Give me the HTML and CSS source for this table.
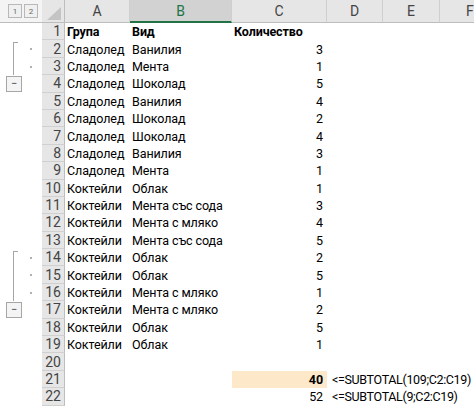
FILE: index.html
```html
<!DOCTYPE html>
<html>
<head>
<meta charset="utf-8">
<link rel="stylesheet" href="styles.css">
</head>
<body>
<div class="sheet">
  <div class="hdr outline-hdr"><span class="lvl">1</span><span class="lvl">2</span></div>
  <div class="hdr corner"><span class="tri"></span></div>
  <div class="hdr col">A</div>
  <div class="hdr col sel">B</div>
  <div class="hdr col">C</div>
  <div class="hdr col">D</div>
  <div class="hdr col">E</div>
  <div class="hdr col last">F</div>

  <div class="ol"></div><div class="rn">1</div><div class="c b">Група</div><div class="c b">Вид</div><div class="c b">Количество</div><div class="c"></div><div class="c"></div><div class="c"></div>
  <div class="ol"><span class="ln start"></span><span class="dot"></span></div><div class="rn">2</div><div class="c">Сладолед</div><div class="c">Ванилия</div><div class="c n">3</div><div class="c"></div><div class="c"></div><div class="c"></div>
  <div class="ol"><span class="ln"></span><span class="dot"></span></div><div class="rn">3</div><div class="c">Сладолед</div><div class="c">Мента</div><div class="c n">1</div><div class="c"></div><div class="c"></div><div class="c"></div>
  <div class="ol"><span class="minus">−</span></div><div class="rn">4</div><div class="c">Сладолед</div><div class="c">Шоколад</div><div class="c n">5</div><div class="c"></div><div class="c"></div><div class="c"></div>
  <div class="ol"></div><div class="rn">5</div><div class="c">Сладолед</div><div class="c">Ванилия</div><div class="c n">4</div><div class="c"></div><div class="c"></div><div class="c"></div>
  <div class="ol"></div><div class="rn">6</div><div class="c">Сладолед</div><div class="c">Шоколад</div><div class="c n">2</div><div class="c"></div><div class="c"></div><div class="c"></div>
  <div class="ol"></div><div class="rn">7</div><div class="c">Сладолед</div><div class="c">Шоколад</div><div class="c n">4</div><div class="c"></div><div class="c"></div><div class="c"></div>
  <div class="ol"></div><div class="rn">8</div><div class="c">Сладолед</div><div class="c">Ванилия</div><div class="c n">3</div><div class="c"></div><div class="c"></div><div class="c"></div>
  <div class="ol"></div><div class="rn">9</div><div class="c">Сладолед</div><div class="c">Мента</div><div class="c n">1</div><div class="c"></div><div class="c"></div><div class="c"></div>
  <div class="ol"></div><div class="rn">10</div><div class="c">Коктейли</div><div class="c">Облак</div><div class="c n">1</div><div class="c"></div><div class="c"></div><div class="c"></div>
  <div class="ol"></div><div class="rn">11</div><div class="c">Коктейли</div><div class="c">Мента със сода</div><div class="c n">3</div><div class="c"></div><div class="c"></div><div class="c"></div>
  <div class="ol"></div><div class="rn">12</div><div class="c">Коктейли</div><div class="c">Мента с мляко</div><div class="c n">4</div><div class="c"></div><div class="c"></div><div class="c"></div>
  <div class="ol"></div><div class="rn">13</div><div class="c">Коктейли</div><div class="c">Мента със сода</div><div class="c n">5</div><div class="c"></div><div class="c"></div><div class="c"></div>
  <div class="ol"><span class="ln start"></span><span class="dot"></span></div><div class="rn">14</div><div class="c">Коктейли</div><div class="c">Облак</div><div class="c n">2</div><div class="c"></div><div class="c"></div><div class="c"></div>
  <div class="ol"><span class="ln"></span><span class="dot"></span></div><div class="rn">15</div><div class="c">Коктейли</div><div class="c">Облак</div><div class="c n">5</div><div class="c"></div><div class="c"></div><div class="c"></div>
  <div class="ol"><span class="ln"></span><span class="dot"></span></div><div class="rn">16</div><div class="c">Коктейли</div><div class="c">Мента с мляко</div><div class="c n">1</div><div class="c"></div><div class="c"></div><div class="c"></div>
  <div class="ol"><span class="minus">−</span></div><div class="rn">17</div><div class="c">Коктейли</div><div class="c">Мента с мляко</div><div class="c n">2</div><div class="c"></div><div class="c"></div><div class="c"></div>
  <div class="ol"></div><div class="rn">18</div><div class="c">Коктейли</div><div class="c">Облак</div><div class="c n">5</div><div class="c"></div><div class="c"></div><div class="c"></div>
  <div class="ol"></div><div class="rn">19</div><div class="c">Коктейли</div><div class="c">Облак</div><div class="c n">1</div><div class="c"></div><div class="c"></div><div class="c"></div>
  <div class="ol"></div><div class="rn">20</div><div class="c"></div><div class="c"></div><div class="c"></div><div class="c"></div><div class="c"></div><div class="c"></div>
  <div class="ol"></div><div class="rn">21</div><div class="c"></div><div class="c"></div><div class="c n b hl">40</div><div class="c over">&lt;=SUBTOTAL(109;C2:C19)</div>
  <div class="ol"></div><div class="rn">22</div><div class="c"></div><div class="c"></div><div class="c n">52</div><div class="c over">&lt;=SUBTOTAL(9;C2:C19)</div>
</div>
</body>
</html>
```
FILE: styles.css
```css
html, body { margin: 0; padding: 0; background: #fff; }
body { width: 474px; height: 408px; overflow: hidden; }
.sheet {
  display: grid;
  grid-template-columns: 42px 23px 65px 102px 95px 56px 57px 34px;
  grid-template-rows: 23px repeat(22, 17.4px);
  font-family: Roboto, "Noto Sans", sans-serif;
  font-size: 12.5px;
  letter-spacing: -0.1px;
  color: #000;
}
.hdr {
  background: #e6e6e6;
  border-bottom: 1px solid #bdbdbd;
  box-sizing: border-box;
  display: flex;
  align-items: center;
  justify-content: center;
  color: #444;
  font-size: 14px;
  letter-spacing: 0;
}
.outline-hdr { justify-content: flex-start; gap: 2px; padding-left: 8px; background: #f4f4f4; }
.lvl {
  width: 14px; height: 14px; box-sizing: border-box;
  border: 1px solid #b8b8b8; background: #f0f0f0;
  font-size: 8px; color: #666; display: flex; align-items: center; justify-content: center;
}
.corner { justify-content: flex-end; padding-right: 3px; border-right: 1px solid #bdbdbd; }
.tri {
  width: 0; height: 0; margin-top: 4px;
  border-left: 14px solid transparent;
  border-bottom: 13px solid #c4c4c4;
}
.col { border-right: 1px solid #cfcfcf; }
.col.last { border-right: none; justify-content: flex-start; padding-left: 26px; }
.col.sel { background: #d2d2d2; color: #217346; border-bottom: 2px solid #217346; }
.ol { position: relative; background: #fff; }
.rn {
  background: #e6e6e6;
  border-bottom: 1px solid #d0d0d0;
  border-right: 1px solid #bdbdbd;
  box-sizing: border-box;
  display: flex; align-items: center; justify-content: flex-end;
  padding-right: 3px;
  color: #444;
  font-size: 14px;
  letter-spacing: 0;
}
.c {
  display: flex; align-items: center;
  padding: 0 2px;
  white-space: nowrap;
  min-width: 0;
}
.c.n { justify-content: flex-end; padding-right: 4px; }
.c.b { font-weight: 700; }
.c.hl { background: #fde9c9; }
.c.over { grid-column: span 3; padding-left: 5px; letter-spacing: -0.35px; }
.ln {
  position: absolute; left: 13px; top: 0; bottom: 0;
  border-left: 1px solid #a6a6a6;
}
.ln.start { top: 2px; }
.ln.start::before {
  content: ""; position: absolute; left: 0; top: 0; width: 4px; border-top: 1px solid #a6a6a6;
}
.dot {
  position: absolute; left: 30px; top: 8px; width: 2px; height: 2px; background: #b0b0b0;
}
.minus {
  position: absolute; left: 6px; top: 0.5px; width: 16px; height: 16px; box-sizing: border-box;
  border: 1px solid #a6a6a6; background: #f4f4f4;
  display: flex; align-items: center; justify-content: center;
  font-size: 11px; color: #444; line-height: 1;
}
```
